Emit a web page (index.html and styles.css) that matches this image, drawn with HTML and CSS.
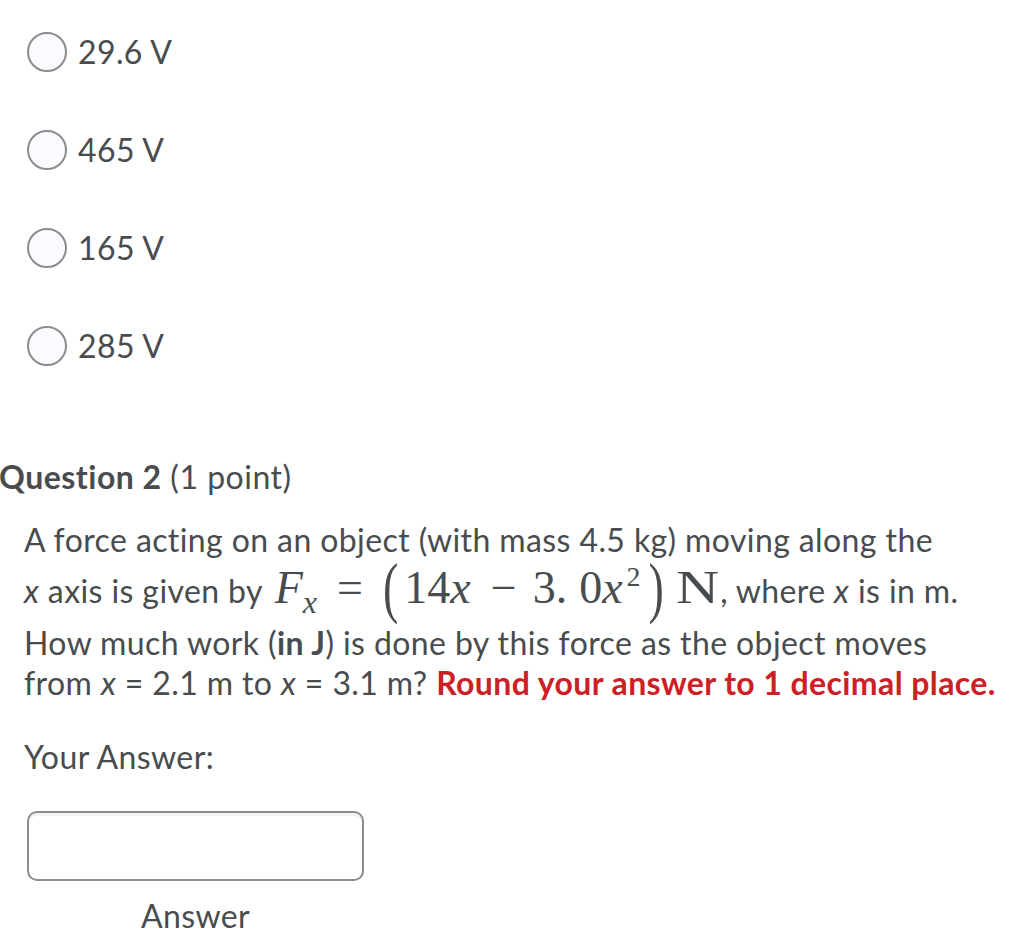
FILE: index.html
```html
<!DOCTYPE html>
<html>
<head>
<meta charset="utf-8">
<link rel="stylesheet" href="styles.css">
</head>
<body>
<div class="page">
  <ul class="options">
    <li class="option"><span class="radio"></span><span class="opt-text">29.6 V</span></li>
    <li class="option"><span class="radio"></span><span class="opt-text">465 V</span></li>
    <li class="option"><span class="radio"></span><span class="opt-text">165 V</span></li>
    <li class="option"><span class="radio"></span><span class="opt-text">285 V</span></li>
  </ul>

  <h2 class="q-title"><strong>Question 2</strong> (1 point)</h2>

  <div class="q-body">
    <p class="para first">A force acting on an object (with mass 4.5 kg) moving along the<br><i>x</i> axis is given by <span class="math"><span class="mi f">F</span><sub class="msub">x</sub><span class="mo eq">=</span><span class="paren l">(</span><span class="mn">14</span><span class="mi">x</span><span class="mo minus">−</span><span class="mn">3.</span><span class="mn zero">0</span><span class="mi">x</span><sup class="msup">2</sup><span class="paren r">)</span><span class="mn n">N</span></span>, where <i>x</i> is in m.</p>
    <p class="para second">How much work (<b>in J</b>) is done by this force as the object moves<br>from <i>x</i> = 2.1 m to <i>x</i> = 3.1 m? <b class="red">Round your answer to 1 decimal place.</b></p>

    <p class="your">Your Answer:</p>
    <div class="answer">
      <div class="input"></div>
      <div class="label">Answer</div>
    </div>
  </div>
</div>
</body>
</html>
```

FILE: styles.css
```css
html, body {
  margin: 0;
  padding: 0;
  background: #ffffff;
}
body {
  font-family: Lato, "Liberation Sans", sans-serif;
  color: #494c4e;
  letter-spacing: 0.4px;
}
.page {
  padding: 0 0 0 24px;
}
.options {
  list-style: none;
  margin: 0;
  padding: 32px 0 0 3px;
  display: flex;
  flex-direction: column;
  gap: 58px;
}
.option {
  display: flex;
  align-items: center;
  gap: 11px;
  height: 40px;
}
.radio {
  width: 36px;
  height: 36px;
  border: 2px solid #8a8c8e;
  border-radius: 50%;
  background: #f9fbff;
  flex: none;
}
.opt-text {
  font-size: 32px;
  line-height: 40px;
}
.q-title {
  margin: 91px 0 0 -25px;
  font-size: 32px;
  font-weight: 400;
  line-height: 40px;
  letter-spacing: 0.5px;
}
.q-title strong {
  font-weight: 700;
}
.q-body {
  margin-top: 18px;
}
.para {
  margin: 0;
  font-size: 32px;
}
.para.first {
  line-height: 50px;
}
.para.second {
  margin-top: 7px;
  line-height: 40px;
}
.math {
  font-family: "Liberation Serif", "DejaVu Serif", serif;
  font-size: 46px;
  line-height: 0;
  letter-spacing: 0;
  white-space: nowrap;
  margin-left: 4px;
  margin-right: 2px;
}
.mi {
  font-style: italic;
  margin-right: 4px;
}
.mi.f {
  margin-right: 0;
}
.msub {
  font-style: italic;
  font-size: 32px;
  vertical-align: -10px;
  line-height: 0;
  margin-right: 2px;
}
.msup {
  font-size: 28px;
  vertical-align: 17px;
  line-height: 0;
}
.mo.eq {
  margin: 0 20px 0 18px;
}
.mo.minus {
  margin: 0 16px 0 16px;
}
.mn.zero {
  margin-left: 12px;
}
.paren {
  display: inline-block;
  font-size: 46px;
  line-height: 46px;
  transform: scaleY(1.48);
  transform-origin: 50% 50%;
}
.paren.l {
  margin-right: 6px;
}
.paren.r {
  margin: 0 12px 0 8px;
}
.mn.n {
  display: inline-block;
  transform: scaleX(1.3);
  transform-origin: left center;
  margin-right: 9px;
}
.red {
  color: #cd2026;
}
.your {
  margin: 34px 0 0 0;
  font-size: 32px;
  line-height: 40px;
}
.answer {
  margin: 34px 0 0 3px;
  width: 337px;
  display: flex;
  flex-direction: column;
  align-items: center;
}
.input {
  box-sizing: border-box;
  width: 337px;
  height: 70px;
  border: 2px solid #8a8c8e;
  border-radius: 10px;
  box-shadow: inset 0 3px 0 #f1f2f4;
  background: #fff;
}
.label {
  margin-top: 15px;
  font-size: 32px;
  line-height: 40px;
}
```
